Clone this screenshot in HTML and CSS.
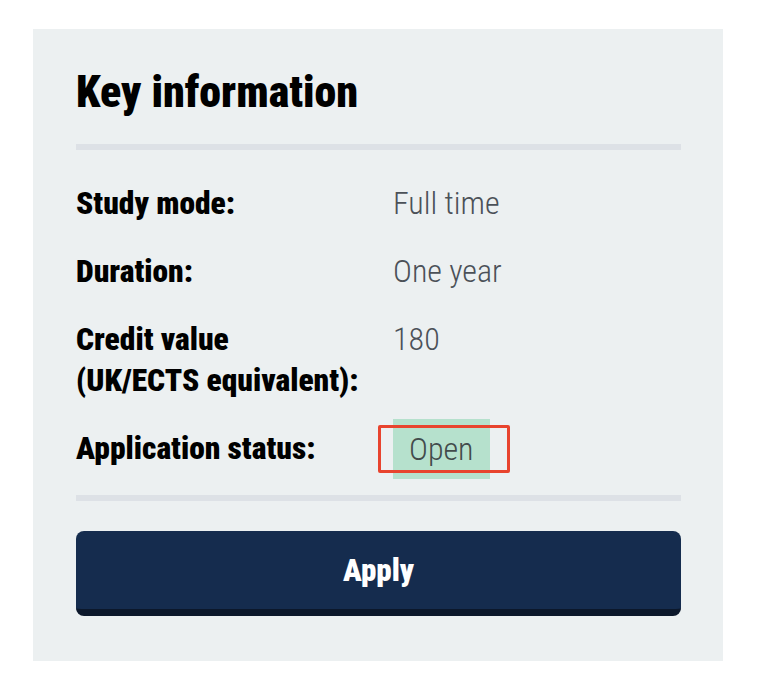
FILE: index.html
```html
<!DOCTYPE html>
<html lang="en">
<head>
    <meta charset="UTF-8">
    <meta name="viewport" content="width=device-width, initial-scale=1.0">
    <title>Key information</title>
    <link rel="stylesheet" href="styles.css">
</head>
<body>

<aside class="key-info">
    <h2>Key information</h2>
    <hr class="divider">

    <dl class="info-list">
        <dt>Study mode:</dt>
        <dd>Full time</dd>

        <dt>Duration:</dt>
        <dd>One year</dd>

        <dt>Credit value<br>(UK/ECTS equivalent):</dt>
        <dd>180</dd>

        <dt>Application status:</dt>
        <dd><span class="status open">Open<span class="annotation"></span></span></dd>
    </dl>

    <hr class="divider">

    <button class="apply-btn">Apply</button>
</aside>

</body>
</html>
```

FILE: styles.css
```css
body {
    margin: 0;
    padding: 0;
    background-color: #fff;
    font-family: Roboto, "Liberation Sans", sans-serif;
    color: #000;
}
.key-info {
    width: 690px;
    box-sizing: border-box;
    margin: 29px 0 0 33px;
    padding: 37px 42px 45px 43px;
    background-color: #ecf0f1;
}
.key-info h2 {
    margin: 0;
    font-size: 44px;
    line-height: 53px;
    font-weight: 900;
    font-stretch: 75%;
}
.divider {
    height: 6px;
    margin: 25px 0 0;
    border: none;
    background-color: #dde1e6;
}
.info-list {
    display: grid;
    grid-template-columns: 317px 1fr;
    row-gap: 27px;
    margin: 33px 0 25px;
}
.info-list dt {
    font-size: 31.5px;
    line-height: 41px;
    font-weight: 900;
    font-stretch: 75%;
}
.info-list dd {
    margin: 0;
    font-weight: 300;
    font-stretch: 87%;
    font-size: 32px;
    line-height: 41px;
    color: #4b5158;
}
.status {
    position: relative;
    display: inline-block;
    padding: 10px 16px 9px;
    margin: -9px 0 -10px;
    color: #424b4b;
}
.status.open {
    background-color: #b6e1cd;
}
/* hand drawn review mark over the badge */
.annotation {
    position: absolute;
    left: -15px;
    top: 6px;
    width: 132px;
    height: 48px;
    box-sizing: border-box;
    border: 3px solid #e8442e;
    border-radius: 2px;
    pointer-events: none;
}
.apply-btn {
    display: block;
    width: 100%;
    height: 85px;
    margin-top: 30px;
    padding: 0;
    background-color: #152c4e;
    color: #fff;
    border: none;
    border-bottom: 7px solid #0c182b;
    border-radius: 8px;
    font-family: Roboto, "Liberation Sans", sans-serif;
    font-size: 31px;
    font-weight: 900;
    font-stretch: 75%;
    cursor: pointer;
}
```
